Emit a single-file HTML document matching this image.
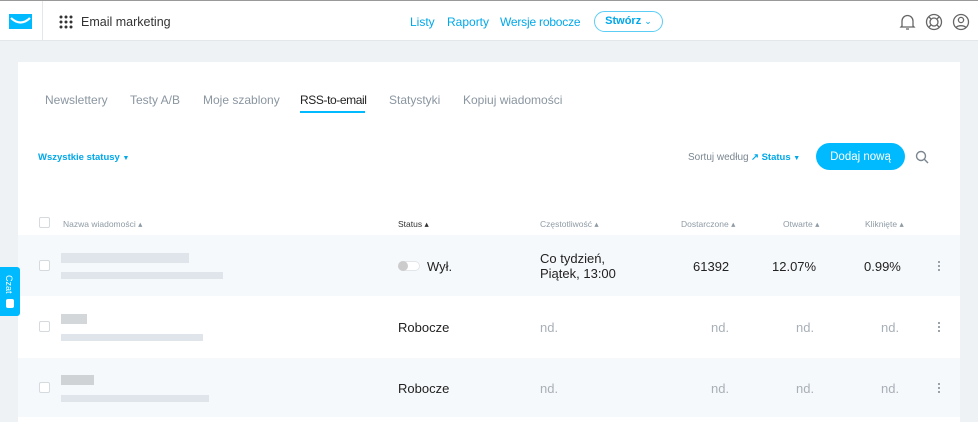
<!DOCTYPE html>
<html><head><meta charset="utf-8"><style>
*{margin:0;padding:0;box-sizing:border-box}
body{width:978px;height:417px;overflow:hidden;background:#eef2f5;font-family:"Liberation Sans",sans-serif;position:relative}
.a{position:absolute;white-space:nowrap}
.hdr{position:absolute;left:0;top:0;width:978px;height:41px;background:#fff;border-top:1px solid #999;border-bottom:1px solid #e3e7ea}
.card{position:absolute;left:18px;top:62px;width:942px;height:360px;background:#fff}
.tab{font-size:12px;color:#8a96a0;top:93px}
.th{font-size:8.5px;color:#8f9ba5;top:219px}
.cb{position:absolute;left:39px;width:11px;height:11px;border:1px solid #d5dade;border-radius:2px;background:#fff}
.bar{position:absolute;background:#dfe5ea;height:7px}
.num{font-size:13px;color:#222}
.nd{font-size:13px;color:#a8b0b7}
.dots{position:absolute;left:938px;width:2px;height:2px;background:#9aa3aa;box-shadow:0 4px #9aa3aa,0 8px #9aa3aa}
</style></head><body>
<div class="hdr">
<svg class="a" style="left:9px;top:13px" width="23" height="15" viewBox="0 0 23 15"><rect width="23" height="15" fill="#00baff"/><path d="M2 4 Q11.5 13 21 4" stroke="#fff" stroke-width="2.2" fill="none"/></svg>
<div class="a" style="left:42px;top:0;width:1px;height:40px;background:#e3e7ea"></div>
<svg class="a" style="left:59px;top:14px" width="14" height="14" viewBox="0 0 14 14" fill="#333"><circle cx="2" cy="2" r="1.5"/><circle cx="7" cy="2" r="1.5"/><circle cx="12" cy="2" r="1.5"/><circle cx="2" cy="7" r="1.5"/><circle cx="7" cy="7" r="1.5"/><circle cx="12" cy="7" r="1.5"/><circle cx="2" cy="12" r="1.5"/><circle cx="7" cy="12" r="1.5"/><circle cx="12" cy="12" r="1.5"/></svg>
<div class="a" style="left:81px;top:14px;font-size:12.5px;color:#333">Email marketing</div>
<div class="a" style="left:410px;top:14px;font-size:12px;color:#00a8ea">Listy</div>
<div class="a" style="left:447px;top:14px;font-size:12px;color:#00a8ea">Raporty</div>
<div class="a" style="left:500px;top:14px;font-size:12px;color:#00a8ea;letter-spacing:-0.2px">Wersje robocze</div>
<div class="a" style="left:594px;top:10px;width:69px;height:21px;border:1px solid #5ccdf5;border-radius:11px;font-size:11px;font-weight:bold;color:#00a8ea;text-align:center;line-height:19px">Stwórz <span style="font-weight:normal;font-size:9px">&#8964;</span></div>
<svg class="a" style="left:899px;top:12px" width="17" height="18" viewBox="0 0 17 18" fill="none" stroke="#666" stroke-width="1.3"><path d="M3 13 V8 a5.5 5.5 0 0 1 11 0 V13 L15 14 H2 Z"/><path d="M7 16 h3"/></svg>
<svg class="a" style="left:925px;top:12px" width="18" height="18" viewBox="0 0 18 18" fill="none" stroke="#666" stroke-width="1.3"><circle cx="9" cy="9" r="7.5"/><circle cx="9" cy="9" r="4"/><path d="M4 4l2.2 2.2M14 4l-2.2 2.2M4 14l2.2-2.2M14 14l-2.2-2.2"/></svg>
<svg class="a" style="left:952px;top:12px" width="18" height="18" viewBox="0 0 18 18" fill="none" stroke="#666" stroke-width="1.3"><circle cx="9" cy="9" r="7.5"/><circle cx="9" cy="7" r="2.6"/><path d="M4 14.5 a6 4 0 0 1 10 0"/></svg>
</div>
<div class="card"></div>
<div class="a tab" style="left:45px">Newslettery</div>
<div class="a tab" style="left:130px">Testy A/B</div>
<div class="a tab" style="left:203px">Moje szablony</div>
<div class="a tab" style="left:300px;color:#222;letter-spacing:-0.4px">RSS-to-email</div>
<div class="a" style="left:300px;top:111px;width:65px;height:2px;background:#00baff"></div>
<div class="a tab" style="left:389px">Statystyki</div>
<div class="a tab" style="left:463px">Kopiuj wiadomości</div>
<div class="a" style="left:38px;top:152px;font-size:9.5px;font-weight:bold;color:#00a8ea">Wszystkie statusy <span style="font-size:7px">&#9660;</span></div>
<div class="a" style="left:688px;top:152px;font-size:10px;color:#7a8690">Sortuj według</div>
<div class="a" style="left:751px;top:152px;font-size:9.5px;font-weight:bold;color:#00a8ea">&#8599; Status <span style="font-size:7px">&#9660;</span></div>
<div class="a" style="left:816px;top:143px;width:89px;height:27px;border-radius:14px;background:#00baff;color:#fff;font-size:11.5px;display:flex;align-items:center;justify-content:center">Dodaj nową</div>
<svg class="a" style="left:915px;top:150px" width="14" height="14" viewBox="0 0 14 14" fill="none" stroke="#7a8690" stroke-width="1.4"><circle cx="6" cy="6" r="4.5"/><path d="M9.3 9.3 L13 13"/></svg>
<div class="cb" style="top:217px"></div>
<div class="a th" style="left:63px">Nazwa wiadomości ▴</div>
<div class="a th" style="left:398px;color:#333">Status ▴</div>
<div class="a th" style="left:540px">Częstotliwość ▴</div>
<div class="a th" style="left:681px">Dostarczone ▴</div>
<div class="a th" style="left:783px">Otwarte ▴</div>
<div class="a th" style="left:865px">Kliknięte ▴</div>
<div class="a" style="left:18px;top:235px;width:942px;height:61px;background:#f6f9fb"></div>
<div class="a" style="left:18px;top:358px;width:942px;height:59px;background:#f6f9fb"></div>
<div class="cb" style="top:260px"></div>
<div class="bar" style="left:61px;top:253px;width:128px;height:10px"></div>
<div class="bar" style="left:61px;top:272px;width:162px"></div>
<div class="a" style="left:398px;top:261px;width:22px;height:10px;border-radius:5px;background:#fff;border:1px solid #e3e6e9"></div>
<div class="a" style="left:398px;top:261px;width:10px;height:10px;border-radius:5px;background:#ccc"></div>
<div class="a num" style="left:427px;top:259px">Wył.</div>
<div class="a num" style="left:540px;top:251px;line-height:15px">Co tydzień,<br>Piątek, 13:00</div>
<div class="a num" style="left:693px;top:259px">61392</div>
<div class="a num" style="left:772px;top:259px">12.07%</div>
<div class="a num" style="left:864px;top:259px">0.99%</div>
<div class="dots" style="top:261px"></div>
<div class="cb" style="top:321px"></div>
<div class="bar" style="left:61px;top:314px;width:26px;height:10px;background:#d3d7da"></div>
<div class="bar" style="left:61px;top:334px;width:142px"></div>
<div class="a num" style="left:398px;top:320px">Robocze</div>
<div class="a nd" style="left:540px;top:320px">nd.</div>
<div class="a nd" style="left:711px;top:320px">nd.</div>
<div class="a nd" style="left:796px;top:320px">nd.</div>
<div class="a nd" style="left:881px;top:320px">nd.</div>
<div class="dots" style="top:322px"></div>
<div class="cb" style="top:382px"></div>
<div class="bar" style="left:61px;top:375px;width:33px;height:10px;background:#cfd3d6"></div>
<div class="bar" style="left:61px;top:395px;width:148px"></div>
<div class="a num" style="left:398px;top:381px">Robocze</div>
<div class="a nd" style="left:540px;top:381px">nd.</div>
<div class="a nd" style="left:711px;top:381px">nd.</div>
<div class="a nd" style="left:796px;top:381px">nd.</div>
<div class="a nd" style="left:881px;top:381px">nd.</div>
<div class="dots" style="top:383px"></div>
<div class="a" style="left:0;top:267px;width:20px;height:49px;background:#00baff;border-radius:0 3px 3px 0"></div>
<div class="a" style="top:275px;font-size:9px;color:#fff;transform:rotate(90deg);transform-origin:left top;left:14px">Czat</div>
<div class="a" style="left:6px;top:299px;width:8px;height:9px;border-radius:2px;background:#fff"></div>
</body></html>
